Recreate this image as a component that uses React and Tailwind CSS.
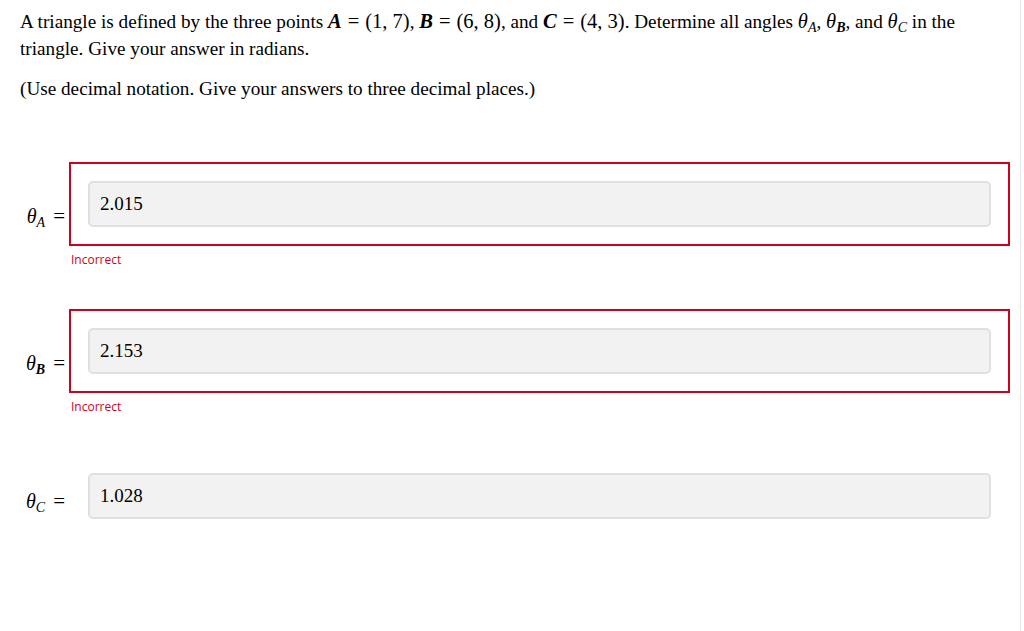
const serif = { fontFamily: '"Liberation Serif", "Times New Roman", serif' };

const Eq = () => <span className="mx-[6px]">=</span>;

const M = ({ children }) => <span className="text-[20.5px]">{children}</span>;

const Theta = ({ sub, boldSub }) => (
  <span className="whitespace-nowrap">
    <i>θ</i>
    <sub className={`text-[14px] italic ${boldSub ? "font-bold" : ""}`}>{sub}</sub>
    <span className="ml-[8px] text-[21px]">=</span>
  </span>
);

const AnswerRow = ({ sub, boldSub, value, incorrect }) => (
  <div>
    <div className="flex items-center">
      <div
        className={`w-[49px] shrink-0 text-right pr-[4px] text-[20px] ${
          incorrect ? "pt-[26px]" : "pt-[12px]"
        }`}
        style={serif}
      >
        <Theta sub={sub} boldSub={boldSub} />
      </div>
      <div
        className={`w-[941px] p-[17px] ${
          incorrect ? "border-2 border-[#d0021b]" : "border-2 border-transparent"
        }`}
      >
        <div
          className="h-[46px] border-2 border-[#e0e0e0] bg-[#f2f2f2] rounded-[5px] pl-[10px] flex items-center text-[19px] text-black"
          style={serif}
        >
          {value}
        </div>
      </div>
    </div>
    {incorrect && (
      <div className="ml-[51px] mt-[6px] text-[12px] leading-[16px] text-[#d0021b] font-['Open_Sans',sans-serif]">
        Incorrect
      </div>
    )}
  </div>
);

export default function App() {
  return (
    <div className="w-[1021px] h-[631px] border-r border-[#e6e6e6] bg-white text-black">
      <div className="pl-[20px] pt-[8px]" style={serif}>
        <p className="text-[19.2px] leading-[27px]">
          A triangle is defined by the three points{" "}
          <M>
            <b><i>A</i></b>
            <Eq />
            (1, 7)
          </M>
          ,{" "}
          <M>
            <b><i>B</i></b>
            <Eq />
            (6, 8)
          </M>
          , and{" "}
          <M>
            <b><i>C</i></b>
            <Eq />
            (4, 3)
          </M>
          . Determine all angles{" "}
          <M>
            <i>θ</i>
            <sub className="text-[14px] italic">A</sub>
          </M>
          ,{" "}
          <M>
            <i>θ</i>
            <sub className="text-[14px] italic font-bold">B</sub>
          </M>
          , and{" "}
          <M>
            <i>θ</i>
            <sub className="text-[14px] italic">C</sub>
          </M>{" "}
          in the
          <br />
          triangle. Give your answer in radians.
        </p>
        <p className="mt-[13px] text-[19.2px] leading-[27px]">
          (Use decimal notation. Give your answers to three decimal places.)
        </p>
      </div>

      <div className="pl-[20px] mt-[60px] flex flex-col">
        <AnswerRow sub="A" value="2.015" incorrect />
        <div className="mt-[41px]">
          <AnswerRow sub="B" boldSub value="2.153" incorrect />
        </div>
        <div className="mt-[39px]">
          <AnswerRow sub="C" value="1.028" />
        </div>
      </div>
    </div>
  );
}
